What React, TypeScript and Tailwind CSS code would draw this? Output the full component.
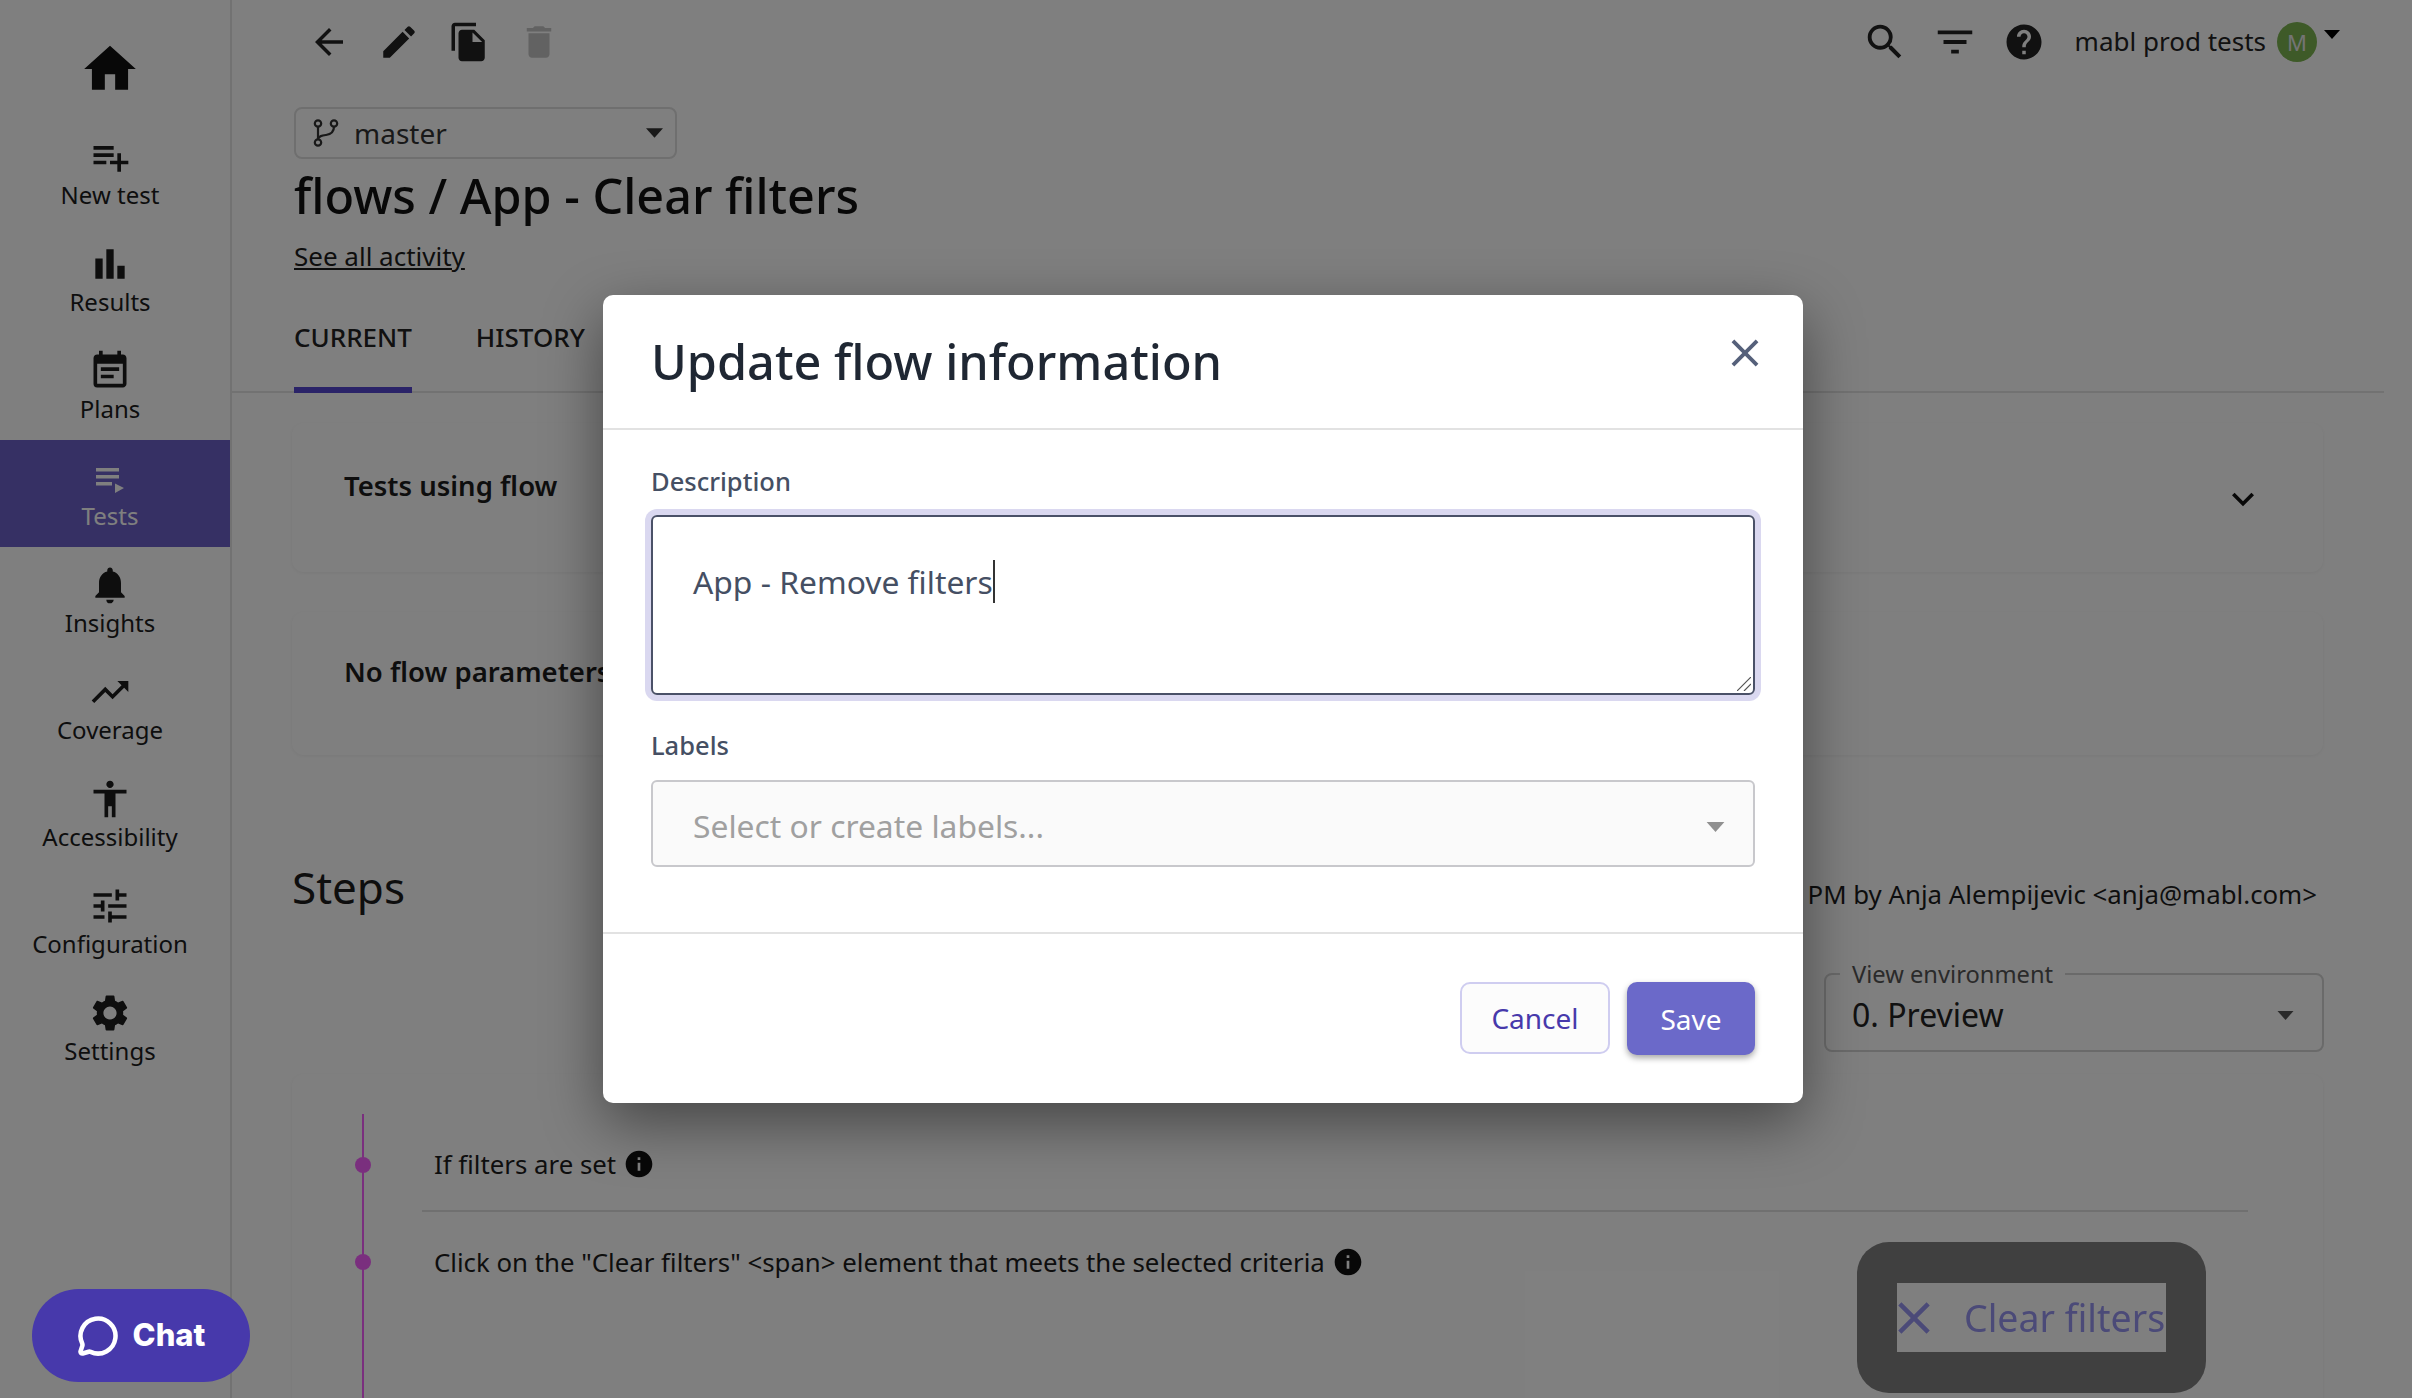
import type { ReactNode } from 'react'
import { MessageCircle } from 'lucide-react'
import {
  MdHome,
  MdPlaylistAdd,
  MdBarChart,
  MdEventNote,
  MdNotifications,
  MdTrendingUp,
  MdAccessibility,
  MdTune,
  MdSettings,
  MdArrowBack,
  MdEdit,
  MdFileCopy,
  MdDelete,
  MdSearch,
  MdFilterList,
  MdHelp,
  MdExpandMore,
  MdInfo,
  MdClose,
} from 'react-icons/md'

const FONT = "font-['Noto_Sans','Open_Sans',sans-serif]"

function Caret({ className }: { className: string }) {
  return (
    <svg viewBox="0 0 16 9" className={className} fill="currentColor">
      <path d="M0 0h16L8 9z" />
    </svg>
  )
}

function BranchIcon() {
  return (
    <svg viewBox="0 0 26 28" className="h-[28px] w-[26px]" fill="none" stroke="currentColor" strokeWidth="2.2">
      <circle cx="5" cy="4.5" r="3.2" />
      <circle cx="21" cy="4.5" r="3.2" />
      <circle cx="5" cy="23.5" r="3.2" />
      <path d="M5 7.7v12.6M21 7.7c0 5-3 7.5-8 8.3-4 .6-7 1-8 4" />
    </svg>
  )
}

function TestsIcon() {
  return (
    <svg viewBox="0 0 28 26" className="mt-[5px] h-[26px] w-[28px]" fill="currentColor">
      <path d="M0 0h23v3.5H0zM0 7h23v3.5H0zM0 14h16v3.5H0zM19 15.5l9 4.5-9 5z" />
    </svg>
  )
}

function NavItem({ icon, label, active }: { icon: ReactNode; label: string; active?: boolean }) {
  return (
    <div
      className={`flex h-[107px] flex-col items-center justify-start pr-[10px] pt-[18px] ${
        active ? 'bg-[#6c60c8] text-white' : 'text-[#1c1c1c]'
      }`}
    >
      <div className="flex h-[40px] items-center justify-center">{icon}</div>
      <div className="mt-[1px] text-[24px] leading-[34px]">{label}</div>
    </div>
  )
}

function Sidebar() {
  return (
    <aside className="h-full w-[232px] shrink-0 border-r-2 border-[#e4e4e4]">
      <div className="flex h-[119px] items-start justify-center pr-[10px] pt-[38px] text-[#111]">
        <MdHome className="h-[62px] w-[62px]" />
      </div>
      <NavItem icon={<MdPlaylistAdd className="h-[44px] w-[44px]" />} label="New test" />
      <NavItem icon={<MdBarChart className="h-[44px] w-[44px]" />} label="Results" />
      <NavItem icon={<MdEventNote className="h-[44px] w-[44px]" />} label="Plans" />
      <NavItem icon={<TestsIcon />} label="Tests" active />
      <NavItem icon={<MdNotifications className="h-[44px] w-[44px]" />} label="Insights" />
      <NavItem icon={<MdTrendingUp className="h-[44px] w-[44px]" />} label="Coverage" />
      <NavItem icon={<MdAccessibility className="h-[44px] w-[44px]" />} label="Accessibility" />
      <NavItem icon={<MdTune className="h-[44px] w-[44px]" />} label="Configuration" />
      <NavItem icon={<MdSettings className="h-[44px] w-[44px]" />} label="Settings" />
    </aside>
  )
}

function TopBar() {
  return (
    <div className="flex h-[84px] items-center justify-between pl-[76px] pr-[72px] text-[#222]">
      <div className="flex items-center gap-[28px]">
        <MdArrowBack className="h-[42px] w-[42px]" />
        <MdEdit className="h-[42px] w-[42px]" />
        <MdFileCopy className="h-[42px] w-[42px]" />
        <MdDelete className="h-[42px] w-[42px] text-[#c4c4c4]" />
      </div>
      <div className="flex items-center">
        <MdSearch className="h-[46px] w-[46px]" />
        <MdFilterList className="ml-[24px] h-[46px] w-[46px]" />
        <MdHelp className="ml-[25px] h-[42px] w-[42px]" />
        <span className="mb-[3px] ml-[30px] text-[26px] leading-[36px]">mabl prod tests</span>
        <span className="ml-[11px] flex h-[40px] w-[40px] items-center justify-center rounded-full bg-[#7cb450] text-[22px] text-[#e8e8e8]">
          M
        </span>
        <Caret className="mb-[16px] ml-[7px] h-[9px] w-[16px] text-black" />
      </div>
    </div>
  )
}

function Step({ text, last, children }: { text: string; last?: boolean; children?: ReactNode }) {
  return (
    <div className={`flex justify-between pl-[12px] ${last ? '' : 'h-[98px] border-b-2 border-[#e0e0e0]'}`}>
      <div className="flex items-center self-start pt-[32px] text-[25.8px] leading-[36px] text-[#1c1c1c]">
        {text}
        <MdInfo className="ml-[7px] h-[32px] w-[32px] text-[#111]" />
      </div>
      {children}
    </div>
  )
}

function Thumbnail() {
  return (
    <div className="mr-[42px] mt-[30px] flex h-[151px] w-[349px] items-center justify-center rounded-[32px] bg-[#808080]">
      <div className="flex h-[69px] w-[269px] items-center overflow-hidden bg-white text-[#9694f0] blur-[0.6px]">
        <MdClose className="-ml-[10px] h-[54px] w-[54px] shrink-0" />
        <span className="ml-[23px] whitespace-nowrap text-[37.5px] leading-none">Clear filters</span>
      </div>
    </div>
  )
}

function Page() {
  return (
    <main className="h-full min-w-0 flex-1 overflow-hidden">
      <TopBar />
      <div className="ml-[62px] mt-[23px] flex h-[52px] w-[383px] items-center rounded-[8px] border-2 border-[#dedede] pl-[17px] pr-[12px] text-[#333]">
        <BranchIcon />
        <span className="ml-[15px] text-[28px] leading-none">master</span>
        <Caret className="ml-auto h-[10px] w-[17px]" />
      </div>
      <h1 className="ml-[62px] text-[48.5px] font-medium leading-[72px] text-[#111]">flows / App - Clear filters</h1>
      <a className="ml-[62px] mt-[7px] block w-fit text-[26px] leading-[36px] text-[#1c1c1c] underline">See all activity</a>
      <div className="mr-[28px] mt-[16px] flex h-[103px] gap-[64px] border-b-2 border-[#e4e4e4] pl-[62px] text-[26px] font-medium text-[#222]">
        <div className="h-[103px] border-b-[6px] border-[#5446d0] pt-[28px]">CURRENT</div>
        <div className="pt-[28px]">HISTORY</div>
      </div>
      <section className="ml-[60px] mr-[89px] mt-[30px] flex h-[149px] justify-between rounded-[12px] bg-white pl-[52px] pr-[58px] shadow-[0_1px_4px_rgba(0,0,0,0.06)]">
        <div className="pt-[43px] text-[27.5px] font-semibold leading-[40px] text-[#1c1c1c]">Tests using flow</div>
        <MdExpandMore className="mt-[54px] h-[44px] w-[44px] text-[#111]" />
      </section>
      <section className="ml-[60px] mr-[89px] mt-[40px] h-[143px] rounded-[12px] bg-white pl-[52px] shadow-[0_1px_4px_rgba(0,0,0,0.06)]">
        <div className="pt-[40px] text-[27.5px] font-semibold leading-[40px] text-[#1c1c1c]">No flow parameters</div>
      </section>
      <div className="ml-[60px] mr-[95px] mt-[104px] flex h-[56px] justify-between">
        <h2 className="text-[44px] leading-[56px] text-[#1c1c1c]">Steps</h2>
        <span className="pt-[15px] text-[25.8px] leading-[40px] text-[#1c1c1c]">PM by Anja Alempijevic &lt;anja@mabl.com&gt;</span>
      </div>
      <div className="ml-[60px] mr-[88px] mt-[58px] flex justify-end">
        <div className="relative flex h-[79px] w-[500px] items-center rounded-[8px] border-2 border-[#d4d4d4] pl-[26px] pr-[27px] pt-[5px] text-[32px] text-[#222]">
          <span className="absolute -top-[16px] left-[14px] bg-white px-[12px] text-[23.7px] leading-[30px] text-[#555]">View environment</span>
          0. Preview
          <Caret className="ml-auto h-[9px] w-[19px] text-[#555]" />
        </div>
      </div>
      <section className="ml-[60px] mr-[89px] mt-[22px] flex h-[340px] rounded-[12px] bg-white shadow-[0_1px_4px_rgba(0,0,0,0.06)]">
        <div className="relative ml-[70px] mt-[40px] w-[2px] bg-[#f45efc]">
          <span className="absolute -left-[7px] top-[43px] h-[16px] w-[16px] rounded-full bg-[#f45efc]" />
          <span className="absolute -left-[7px] top-[140px] h-[16px] w-[16px] rounded-full bg-[#f45efc]" />
        </div>
        <div className="ml-[58px] mr-[75px] mt-[40px] min-w-0 flex-1">
          <Step text="If filters are set" />
          <Step text={'Click on the "Clear filters" <span> element that meets the selected criteria'} last>
            <Thumbnail />
          </Step>
        </div>
      </section>
    </main>
  )
}

function FlowModal() {
  return (
    <div className="absolute left-[603px] top-[295px] h-[808px] w-[1200px] rounded-[10px] bg-white shadow-[0_20px_60px_rgba(0,0,0,0.45)]">
      <div className="flex h-[135px] items-start justify-between border-b-2 border-[#e2e2e2] pl-[48px] pr-[35px]">
        <h2 className="pt-[33px] text-[48.6px] font-medium leading-[66px] text-[#1f2733]">Update flow information</h2>
        <MdClose className="mt-[35px] h-[46px] w-[46px] text-[#55607a]" />
      </div>
      <div className="flex h-[504px] flex-col border-b-2 border-[#e2e2e2] px-[48px]">
        <label className="mt-[34px] text-[25.5px] font-medium leading-[34px] text-[#454f63]">Description</label>
        <div className="relative mt-[17px] h-[180px] w-[1104px] rounded-[6px] border-2 border-[#4a5168] pl-[40px] pt-[43px] ring-[6px] ring-[#dad8f0]">
          <span className="border-r-2 border-[#333] text-[31.8px] leading-[44px] text-[#454f63]">App - Remove filters</span>
          <svg viewBox="0 0 14 14" className="absolute bottom-[2px] right-[2px] h-[14px] w-[14px] text-[#555]" stroke="currentColor" strokeWidth="1.2">
            <path d="M0 14L14 0M7 14l7-7" />
          </svg>
        </div>
        <label className="mt-[33px] text-[25.5px] font-medium leading-[34px] text-[#454f63]">Labels</label>
        <div className="mt-[18px] flex h-[87px] w-[1104px] items-center rounded-[6px] border-2 border-[#c8c8cc] bg-[#fafafa] pl-[40px] pr-[28px] pt-[4px] text-[31.8px] text-[#a0a0a0]">
          Select or create labels...
          <Caret className="ml-auto mt-[2px] h-[10px] w-[19px] text-[#909090]" />
        </div>
      </div>
      <div className="flex justify-end gap-[17px] pr-[48px] pt-[48px]">
        <button className="h-[72px] w-[150px] rounded-[10px] border-2 border-[#cfcdf0] bg-[#fcfcfc] text-[28px] text-[#4739ab]">Cancel</button>
        <button className="h-[73px] w-[128px] rounded-[10px] bg-[#6b69c9] text-[28px] text-white shadow-[0_3px_6px_rgba(0,0,0,0.35)]">Save</button>
      </div>
    </div>
  )
}

export default function App() {
  return (
    <div className={`relative flex h-[1398px] w-full overflow-hidden bg-white ${FONT}`}>
      <Sidebar />
      <Page />
      <div className="absolute inset-0 bg-black/50" />
      <FlowModal />
      <button className="absolute left-[32px] top-[1289px] flex h-[93px] w-[218px] items-center justify-center gap-[14px] rounded-full bg-[#4739ab] font-['Inter',sans-serif] text-[31px] font-extrabold text-white">
        <MessageCircle className="h-[42px] w-[42px]" strokeWidth={2.6} />
        Chat
      </button>
    </div>
  )
}
